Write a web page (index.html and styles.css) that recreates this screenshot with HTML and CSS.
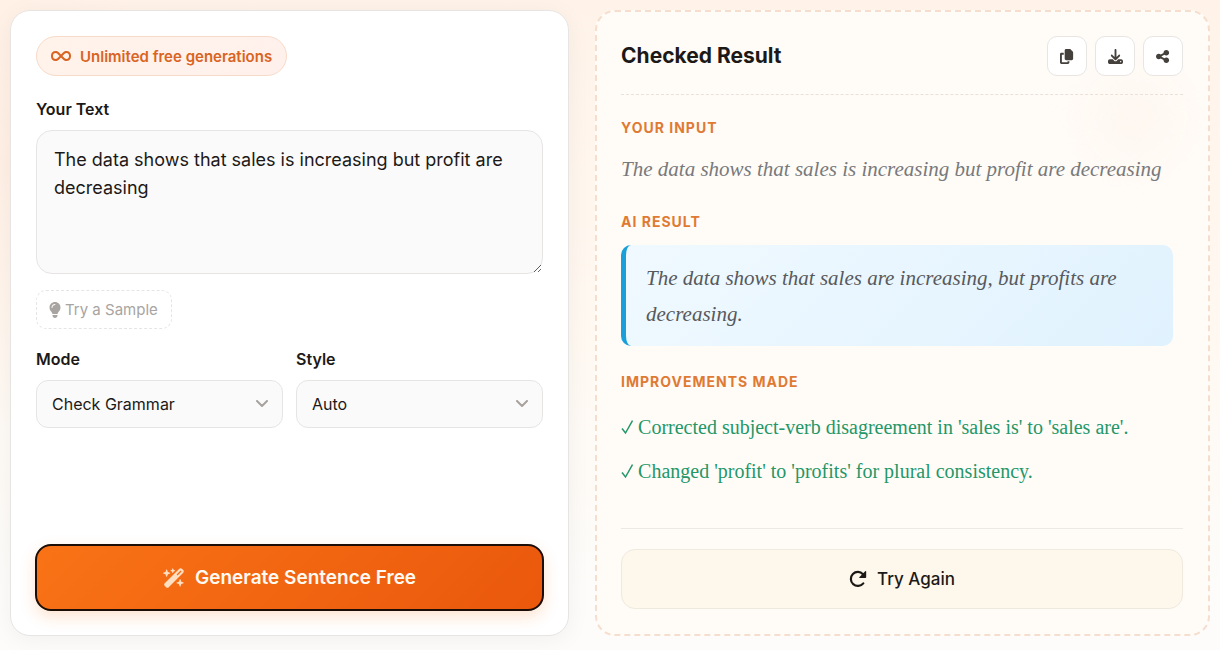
FILE: index.html
```html
<!DOCTYPE html>
<html lang="en">
<head>
<meta charset="utf-8">
<meta name="viewport" content="width=device-width, initial-scale=1">
<title>Sentence Generator</title>
<link rel="stylesheet" href="styles.css">
</head>
<body>
<main class="layout">
  <form class="panel panel-form">
    <p class="badge">
      <svg class="badge-icon" viewBox="0 0 640 512" aria-hidden="true"><path d="M0 241.1C0 161 65 96 145.1 96c38.5 0 75.4 15.3 102.6 42.5L320 210.7l72.2-72.2C419.5 111.3 456.4 96 494.9 96C575 96 640 161 640 241.1l0 29.7C640 351 575 416 494.9 416c-38.5 0-75.4-15.3-102.6-42.5L320 301.3l-72.2 72.2C220.5 400.7 183.6 416 145.1 416C65 416 0 351 0 270.9l0-29.7zM274.7 256l-72.2-72.2c-15.2-15.2-35.9-23.8-57.4-23.8C100.3 160 64 196.3 64 241.1l0 29.7c0 44.8 36.3 81.1 81.1 81.1c21.5 0 42.2-8.5 57.4-23.8L274.7 256zm90.5 0l72.2 72.2c15.2 15.2 35.9 23.8 57.4 23.8c44.8 0 81.1-36.3 81.1-81.1l0-29.7c0-44.8-36.3-81.1-81.1-81.1c-21.5 0-42.2 8.5-57.4 23.8L365.3 256z"/></svg>
      Unlimited free generations
    </p>
    <label class="label" for="source">Your Text</label>
    <textarea class="source" id="source">The data shows that sales is increasing but profit are decreasing</textarea>
    <button class="sample" type="button">
      <svg class="sample-icon" viewBox="0 0 384 512" aria-hidden="true"><path d="M272 384c9.6-31.9 29.5-59.1 49.2-86.2c5.2-7.1 10.4-14.2 15.4-21.4c19.8-28.5 31.4-63 31.4-100.3C368 78.8 289.2 0 192 0S16 78.8 16 176c0 37.3 11.6 71.9 31.4 100.3c5 7.2 10.2 14.3 15.4 21.4c19.8 27.1 39.7 54.4 49.2 86.2l160 0zM192 512c44.2 0 80-35.8 80-80l0-16-160 0 0 16c0 44.2 35.8 80 80 80zM112 176c0 8.8-7.2 16-16 16s-16-7.2-16-16c0-61.9 50.1-112 112-112c8.8 0 16 7.2 16 16s-7.2 16-16 16c-44.2 0-80 35.8-80 80z"/></svg>
      Try a Sample
    </button>
    <div class="options">
      <div class="field">
        <label class="label" for="mode">Mode</label>
        <div class="select-box">
          <select class="select" id="mode"><option>Check Grammar</option></select>
          <svg class="chevron" viewBox="0 0 12 8" aria-hidden="true"><path d="M1 1l5 5 5-5"/></svg>
        </div>
      </div>
      <div class="field">
        <label class="label" for="style">Style</label>
        <div class="select-box">
          <select class="select" id="style"><option>Auto</option></select>
          <svg class="chevron" viewBox="0 0 12 8" aria-hidden="true"><path d="M1 1l5 5 5-5"/></svg>
        </div>
      </div>
    </div>
    <button class="generate" type="button">
      <svg class="generate-icon" viewBox="0 0 576 512" aria-hidden="true"><path d="M234.7 42.7L197 56.8c-3 1.1-5 4-5 7.2s2 6.1 5 7.2l37.7 14.1L248.8 123c1.1 3 4 5 7.2 5s6.1-2 7.2-5l14.1-37.7L315 71.2c3-1.1 5-4 5-7.2s-2-6.1-5-7.2L277.3 42.7 263.2 5c-1.1-3-4-5-7.2-5s-6.1 2-7.2 5L234.7 42.7zM46.1 395.4c-18.7 18.7-18.7 49.1 0 67.9l34.6 34.6c18.7 18.7 49.1 18.7 67.9 0L529.9 116.5c18.7-18.7 18.7-49.1 0-67.9L495.3 14.1c-18.7-18.7-49.1-18.7-67.9 0L46.1 395.4zM484.6 82.6l-105 105-23.3-23.3 105-105 23.3 23.3zM7.5 117.2C3 118.9 0 123.2 0 128s3 9.1 7.5 10.8L64 160l21.2 56.5c1.7 4.5 6 7.5 10.8 7.5s9.1-3 10.8-7.5L128 160l56.5-21.2c4.5-1.7 7.5-6 7.5-10.8s-3-9.1-7.5-10.8L128 96 106.8 39.5C105.1 35 100.8 32 96 32s-9.1 3-10.8 7.5L64 96 7.5 117.2zm352 256c-4.5 1.7-7.5 6-7.5 10.8s3 9.1 7.5 10.8L416 416l21.2 56.5c1.7 4.5 6 7.5 10.8 7.5s9.1-3 10.8-7.5L480 416l56.5-21.2c4.5-1.7 7.5-6 7.5-10.8s-3-9.1-7.5-10.8L480 352l-21.2-56.5c-1.7-4.5-6-7.5-10.8-7.5s-9.1 3-10.8 7.5L416 352l-56.5 21.2z"/></svg>
      Generate Sentence Free
    </button>
  </form>

  <section class="panel panel-result">
    <header class="result-head">
      <h2 class="result-title">Checked Result</h2>
      <div class="tools">
        <button class="tool" type="button" aria-label="Copy"><svg class="tool-icon" viewBox="0 0 448 512" aria-hidden="true"><path d="M208 0L332.1 0c12.7 0 24.9 5.1 33.9 14.1l67.9 67.9c9 9 14.1 21.2 14.1 33.9L448 336c0 26.5-21.5 48-48 48l-192 0c-26.5 0-48-21.5-48-48l0-288c0-26.5 21.5-48 48-48zM48 128l80 0 0 64-64 0 0 256 192 0 0-32 64 0 0 48c0 26.5-21.5 48-48 48L48 512c-26.5 0-48-21.5-48-48L0 176c0-26.5 21.5-48 48-48z"/></svg></button>
        <button class="tool" type="button" aria-label="Download"><svg class="tool-icon" viewBox="0 0 512 512" aria-hidden="true"><path d="M288 32c0-17.7-14.3-32-32-32s-32 14.3-32 32l0 242.7-73.4-73.4c-12.5-12.5-32.8-12.5-45.3 0s-12.5 32.8 0 45.3l128 128c12.5 12.5 32.8 12.5 45.3 0l128-128c12.5-12.5 12.5-32.8 0-45.3s-32.8-12.5-45.3 0L288 274.7 288 32zM64 352c-35.3 0-64 28.7-64 64l0 32c0 35.3 28.7 64 64 64l384 0c35.3 0 64-28.7 64-64l0-32c0-35.3-28.7-64-64-64l-101.5 0-45.3 45.3c-25 25-65.5 25-90.5 0L165.5 352 64 352zm368 56a24 24 0 1 1 0 48 24 24 0 1 1 0-48z"/></svg></button>
        <button class="tool" type="button" aria-label="Share"><svg class="tool-icon" viewBox="0 0 448 512" aria-hidden="true"><path d="M352 224c53 0 96-43 96-96s-43-96-96-96s-96 43-96 96c0 4 .2 8 .7 11.9l-94.1 47C145.4 170.2 121.9 160 96 160c-53 0-96 43-96 96s43 96 96 96c25.9 0 49.4-10.2 66.6-26.9l94.1 47c-.5 3.9-.7 7.8-.7 11.9c0 53 43 96 96 96s96-43 96-96s-43-96-96-96c-25.9 0-49.4 10.2-66.6 26.9l-94.1-47c.5-3.9 .7-7.8 .7-11.9s-.2-8-.7-11.9l94.1-47C302.6 213.8 326.1 224 352 224z"/></svg></button>
      </div>
    </header>
    <div class="result-body">
      <h3 class="section-title">Your Input</h3>
      <p class="quote">The data shows that sales is increasing but profit are decreasing</p>
      <h3 class="section-title">AI Result</h3>
      <p class="answer">The data shows that sales are increasing, but profits are decreasing.</p>
      <h3 class="section-title">Improvements Made</h3>
      <ul class="changes">
        <li class="change"><svg class="check" viewBox="0 0 12 16" aria-hidden="true"><path d="M1 9.500l3.500 4.500L11.500 1.500"/></svg>Corrected subject-verb disagreement in 'sales is' to 'sales are'.</li>
        <li class="change"><svg class="check" viewBox="0 0 12 16" aria-hidden="true"><path d="M1 9.500l3.500 4.500L11.500 1.500"/></svg>Changed 'profit' to 'profits' for plural consistency.</li>
      </ul>
    </div>
    <footer class="result-foot">
      <button class="retry" type="button">
        <svg class="retry-icon" viewBox="0 0 18 18" aria-hidden="true"><path class="retry-arc" d="M14.300 13.400A7 7 0 1 1 14 4.200"/><path class="retry-head" d="M16.200 1.200q1-.8 1 .5v5.500q0 .8-.8.8h-5.500q-1.300 0-.4-1z"/></svg>
        Try Again
      </button>
    </footer>
  </section>
</main>
</body>
</html>
```
FILE: styles.css
```css
* {
  box-sizing: border-box;
}

body {
  margin: 0;
  min-height: 100vh;
  display: flex;
  font-family: Inter, "Liberation Sans", sans-serif;
  color: #1c1917;
  background:
    radial-gradient(circle at 0 25%, rgba(255, 226, 211, 0.3), transparent 260px),
    linear-gradient(180deg, #fff3e9 0%, #fff8f0 45%, #fdfcfa 90%);
}

button,
select,
textarea {
  font: inherit;
  color: inherit;
}

h2,
h3,
p,
ul {
  margin: 0;
  padding: 0;
}

svg {
  flex: none;
  fill: currentColor;
}

.layout {
  flex: 1;
  display: grid;
  grid-template-columns: minmax(0, 10fr) minmax(0, 11fr);
  gap: 26px;
  padding: 10px 10px 14px;
}

.panel {
  display: flex;
  flex-direction: column;
  border-radius: 20px;
}

.panel-form {
  padding: 25px 25px 24px;
  background: #fff;
  border: 1px solid #e7e5e4;
  box-shadow: 0 4px 24px rgba(28, 25, 23, 0.05);
}

.badge {
  align-self: flex-start;
  display: flex;
  align-items: center;
  gap: 9px;
  height: 40px;
  margin-bottom: 21px;
  padding: 0 14px;
  border: 1px solid #f8dac8;
  border-radius: 20px;
  background: linear-gradient(135deg, #fff3ea, #fff0ec);
  color: #d96422;
  font-size: 15px;
  font-weight: 600;
}

.badge-icon {
  width: 20px;
  height: 16px;
}

.label {
  display: block;
  margin-bottom: 9px;
  font-size: 16px;
  font-weight: 600;
  line-height: 24px;
}

.source {
  width: 100%;
  height: 144px;
  padding: 15px 17px;
  border: 1px solid #e7e5e4;
  border-radius: 16px;
  outline: none;
  background: #fafafa;
  font-size: 18px;
  line-height: 28px;
  resize: vertical;
}

.sample {
  align-self: flex-start;
  display: flex;
  align-items: center;
  gap: 4px;
  height: 39px;
  margin: 16px 0 18px;
  padding: 0 13px 0 12px;
  border: 1px dashed #e7e5e4;
  border-radius: 10px;
  background: transparent;
  color: #a8a4a1;
  font-size: 15px;
}

.sample-icon {
  width: 12px;
  height: 16px;
}

.options {
  display: grid;
  grid-template-columns: 1fr 1fr;
  gap: 13px;
  margin-bottom: 24px;
}

.select-box {
  display: grid;
  align-items: center;
}

.select {
  grid-area: 1 / 1;
  width: 100%;
  height: 48px;
  padding: 0 40px 0 15px;
  border: 1px solid #e7e5e4;
  border-radius: 12px;
  background: #fafafa;
  font-size: 16px;
  appearance: none;
}

.chevron {
  grid-area: 1 / 1;
  justify-self: end;
  width: 12px;
  height: 8px;
  margin-right: 15px;
  fill: none;
  stroke: #a8a29e;
  stroke-width: 2;
  stroke-linecap: round;
  stroke-linejoin: round;
  pointer-events: none;
}

.generate {
  display: flex;
  align-items: center;
  justify-content: center;
  gap: 10px;
  height: 67px;
  margin: auto -1px 0;
  border: 2px solid #1c0d06;
  border-radius: 16px;
  background: linear-gradient(135deg, #f97316, #ea580c);
  box-shadow: 0 6px 16px rgba(249, 115, 22, 0.2);
  color: #fffaf2;
  font-size: 19px;
  font-weight: 600;
}

.generate-icon {
  width: 22px;
  height: 20px;
  fill: #ffdfc2;
}

.panel-result {
  padding: 24px 25px 25px 24px;
  border: 2px dashed #f6decf;
  background:
    radial-gradient(circle at 88% 17%, rgba(255, 240, 230, 0.4), transparent 90px),
    #fffcf8;
}

.result-head {
  display: flex;
  align-items: center;
  justify-content: space-between;
  padding-bottom: 18px;
  border-bottom: 1px dashed #ebe1da;
}

.result-title {
  font-size: 21px;
  font-weight: 700;
  line-height: 28px;
}

.tools {
  display: flex;
  gap: 8px;
}

.tool {
  display: flex;
  align-items: center;
  justify-content: center;
  width: 40px;
  height: 40px;
  padding: 0;
  border: 1px solid #e9e5e2;
  border-radius: 10px;
  background: #fff;
  color: #44403c;
}

.tool-icon {
  height: 15px;
}

.result-body {
  padding: 22px 10px 24px 0;
  font-family: Georgia, "Liberation Serif", serif;
  font-size: 20px;
}

.section-title {
  color: #e07a33;
  font-family: Inter, "Liberation Sans", sans-serif;
  font-size: 14px;
  font-weight: 700;
  line-height: 22px;
  letter-spacing: 1px;
  text-transform: uppercase;
}

.quote {
  margin: 12px 0 24px;
  color: #78797b;
  font-size: 21px;
  font-style: italic;
  line-height: 36px;
}

.answer {
  margin: 12px 0 25px;
  padding: 15px 20px 14px;
  border-left: 5px solid #1a9fd9;
  border-radius: 10px;
  background: linear-gradient(135deg, #f0f9ff, #e0f2fe);
  color: #57595c;
  font-size: 21px;
  font-style: italic;
  line-height: 36px;
}

.changes {
  display: grid;
  gap: 8px;
  margin-top: 16px;
  list-style: none;
}

.change {
  display: flex;
  align-items: center;
  gap: 5px;
  color: #249768;
  line-height: 36px;
}

.check {
  width: 12px;
  height: 16px;
  fill: none;
  stroke: currentColor;
  stroke-width: 1.500;
}

.result-foot {
  margin-top: auto;
  padding-top: 20px;
  border-top: 1px solid #ece8e4;
}

.retry {
  display: flex;
  align-items: center;
  justify-content: center;
  gap: 10px;
  width: 100%;
  height: 60px;
  border: 1px solid #efe9df;
  border-radius: 14px;
  background: #fef8ec;
  font-size: 17px;
  font-weight: 500;
}

.retry-icon {
  width: 18px;
  height: 18px;
}

.retry-arc {
  fill: none;
  stroke: currentColor;
  stroke-width: 2.200;
  stroke-linecap: round;
}
```
